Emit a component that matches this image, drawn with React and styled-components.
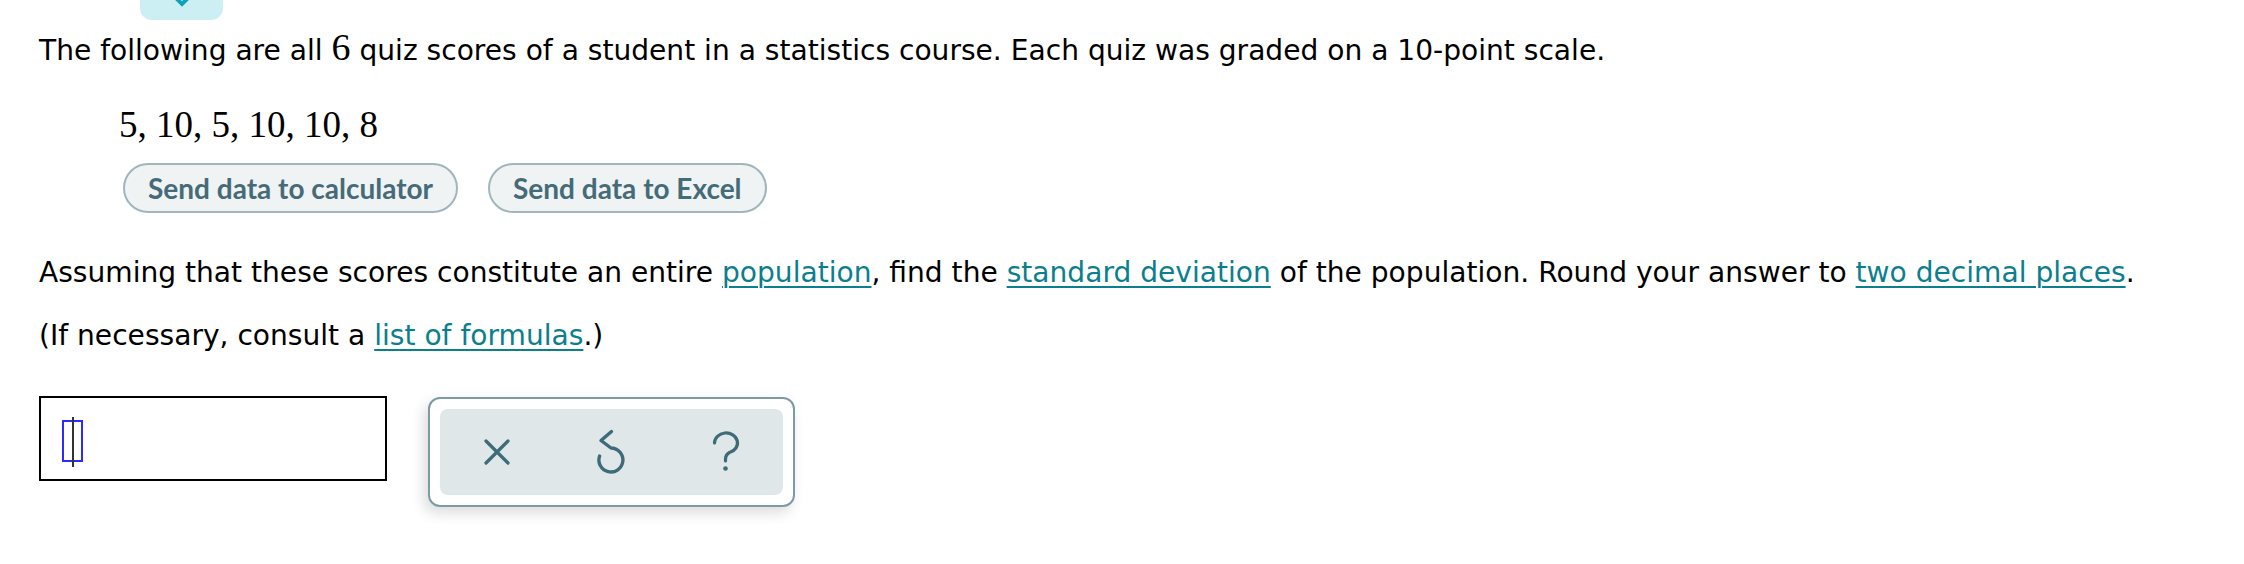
import React from "react";
import styled, { createGlobalStyle } from "styled-components";

const GlobalStyle = createGlobalStyle`
  html, body {
    margin: 0;
    padding: 0;
    background: #fff;
  }
  body {
    font-family: "DejaVu Sans", Verdana, sans-serif;
    color: #000;
  }
`;

const Page = styled.div`
  width: 2244px;
  height: 564px;
  padding-left: 39px;
  box-sizing: border-box;
  overflow: hidden;
`;

const TopTab = styled.div`
  width: 83px;
  height: 20px;
  margin-left: 101px;
  background: #ccefF4;
  border-radius: 0 0 12px 12px;
  overflow: hidden;
  svg {
    display: block;
  }
`;

const Prompt = styled.p`
  margin: 0;
  font-size: 28.1px;
  line-height: 36px;
  white-space: nowrap;
  margin-top: ${(p) => p.$top || 0}px;
`;

const MathNum = styled.span`
  font-family: "Liberation Serif", "Times New Roman", serif;
  font-size: 38px;
  line-height: 0;
`;

const DataLine = styled.div`
  margin: 34px 0 0 80px;
  font-family: "Liberation Serif", "Times New Roman", serif;
  font-size: 37px;
  line-height: 44px;
`;

const ButtonRow = styled.div`
  display: flex;
  gap: 30px;
  margin: 16px 0 0 84px;
`;

const DataButton = styled.button`
  height: 50px;
  padding: 0 23px;
  border: 2px solid #a0b5bc;
  border-radius: 25px;
  background: #eff3f4;
  color: #466b78;
  font-family: Lato, "Open Sans", sans-serif;
  font-weight: 700;
  font-size: 28px;
  cursor: pointer;
`;

const Link = styled.a`
  color: #0b7f8d;
  text-decoration: underline;
  text-underline-offset: 4px;
  text-decoration-thickness: 2px;
`;

const AnswerRow = styled.div`
  display: flex;
  align-items: flex-start;
  gap: 41px;
  margin-top: 42px;
`;

const AnswerBox = styled.div`
  width: 348px;
  height: 85px;
  border: 2px solid #000;
  box-sizing: border-box;
  display: flex;
  align-items: center;
  padding-left: 21px;
`;

const Cursor = styled.div`
  position: relative;
  width: 21px;
  height: 42px;
  border: 2px solid #2b2bff;
  box-sizing: border-box;
  margin-top: 4px;
  &::before {
    content: "";
    position: absolute;
    left: 8px;
    top: -5px;
    width: 2px;
    height: 50px;
    background: #333;
  }
`;

const ToolPanel = styled.div`
  width: 367px;
  height: 110px;
  margin-top: 1px;
  box-sizing: border-box;
  border: 2px solid #7d9ba4;
  border-radius: 12px;
  padding: 10px;
  background: #fff;
  box-shadow: -4px 6px 14px rgba(0, 0, 0, 0.14);
`;

const ToolInner = styled.div`
  height: 100%;
  border-radius: 8px;
  background: #dfe7e9;
  display: grid;
  grid-template-columns: repeat(3, 1fr);
  align-items: center;
  justify-items: center;
`;

const ToolButton = styled.button`
  border: 0;
  background: none;
  padding: 0;
  display: flex;
  cursor: pointer;
`;

const ink = "#3e6b78";

function ClearIcon() {
  return (
    <svg width="28" height="28" viewBox="0 0 28 28">
      <path d="M3 3 L25 25 M25 3 L3 25" stroke={ink} strokeWidth="3.2" strokeLinecap="round" fill="none" />
    </svg>
  );
}

function UndoIcon() {
  return (
    <svg width="32" height="48" viewBox="0 0 32 48">
      <path
        d="M16.5 3.5 L6 12.5 L16 20 A12 12 0 1 1 4.6 28"
        stroke={ink}
        strokeWidth="3.4"
        strokeLinecap="round"
        strokeLinejoin="round"
        fill="none"
      />
    </svg>
  );
}

function HelpIcon() {
  return (
    <svg width="32" height="44" viewBox="0 0 32 44">
      <path
        d="M4.5 13 A11.5 10 0 1 1 19.5 22.5 Q15.5 24.5 15.5 29.5 V31"
        stroke={ink}
        strokeWidth="3.2"
        strokeLinecap="round"
        fill="none"
      />
      <circle cx="15.5" cy="38.5" r="2.3" fill={ink} />
    </svg>
  );
}

export default function App() {
  return (
    <>
      <GlobalStyle />
      <Page>
        <TopTab>
          <svg width="83" height="20" viewBox="0 0 83 20">
            <path d="M34 -4 L42 4 L50 -4" stroke="#10a2bd" strokeWidth="4" fill="none" strokeLinecap="round" />
          </svg>
        </TopTab>
        <Prompt $top={13}>
          The following are all <MathNum>6</MathNum> quiz scores of a student in a statistics course. Each quiz
          was graded on a 10-point scale.
        </Prompt>
        <DataLine>5, 10, 5, 10, 10, 8</DataLine>
        <ButtonRow>
          <DataButton>Send data to calculator</DataButton>
          <DataButton>Send data to Excel</DataButton>
        </ButtonRow>
        <Prompt $top={42}>
          Assuming that these scores constitute an entire <Link>population</Link>, find the{" "}
          <Link>standard deviation</Link> of the population. Round your answer to <Link>two decimal places</Link>.
        </Prompt>
        <Prompt $top={27}>
          (If necessary, consult a <Link>list of formulas</Link>.)
        </Prompt>
        <AnswerRow>
          <AnswerBox>
            <Cursor />
          </AnswerBox>
          <ToolPanel>
            <ToolInner>
              <ToolButton aria-label="Clear">
                <ClearIcon />
              </ToolButton>
              <ToolButton aria-label="Undo">
                <UndoIcon />
              </ToolButton>
              <ToolButton aria-label="Help">
                <HelpIcon />
              </ToolButton>
            </ToolInner>
          </ToolPanel>
        </AnswerRow>
      </Page>
    </>
  );
}
